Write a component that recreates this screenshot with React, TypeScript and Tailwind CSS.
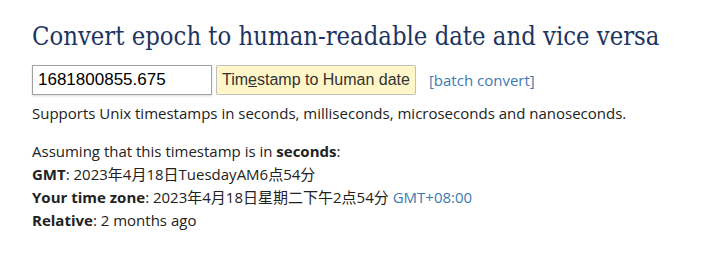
export default function App() {
  return (
    <div className="bg-white w-[708px] h-[257px] px-[32px] pt-[20px]">
      <h1 className="text-[25.4px] leading-[32px] text-[#1d3461] font-['DejaVu_Serif_Condensed','DejaVu_Serif',serif] [font-stretch:condensed] whitespace-nowrap">
        Convert epoch to human-readable date and vice versa
      </h1>
      <div className="flex items-center mt-[13px] h-[30px]">
        <input
          defaultValue="1681800855.675"
          className="w-[180px] h-[30px] border border-[#a0a0a0] px-[5px] text-[17px] text-black font-['Liberation_Sans',sans-serif] outline-none shadow-[0_1px_2px_rgba(0,0,0,0.15)]"
        />
        <button className="ml-[4px] h-[30px] px-[5px] bg-[#fff7c7] border border-[#bfbfbf] rounded-[2px] text-[16px] text-[#333] font-['Liberation_Sans',sans-serif]">
          Tim<span className="underline">e</span>stamp to Human date
        </button>
        <a className="ml-[13px] text-[15px] text-[#3d7ab3] font-['Open_Sans',sans-serif]">[batch convert]</a>
      </div>
      <p className="mt-[7px] text-[15px] leading-[23px] text-[#222] font-['Open_Sans',sans-serif]">
        Supports Unix timestamps in seconds, milliseconds, microseconds and nanoseconds.
      </p>
      <div className="mt-[15px] text-[15px] leading-[23px] text-[#222] font-['Open_Sans','Noto_Sans_CJK_SC',sans-serif]">
        <div>Assuming that this timestamp is in <b>seconds</b>:</div>
        <div><b>GMT</b>: 2023年4月18日TuesdayAM6点54分</div>
        <div><b>Your time zone</b>: 2023年4月18日星期二下午2点54分 <span className="text-[#3d7ab3]">GMT+08:00</span></div>
        <div><b>Relative</b>: 2 months ago</div>
      </div>
    </div>
  );
}
